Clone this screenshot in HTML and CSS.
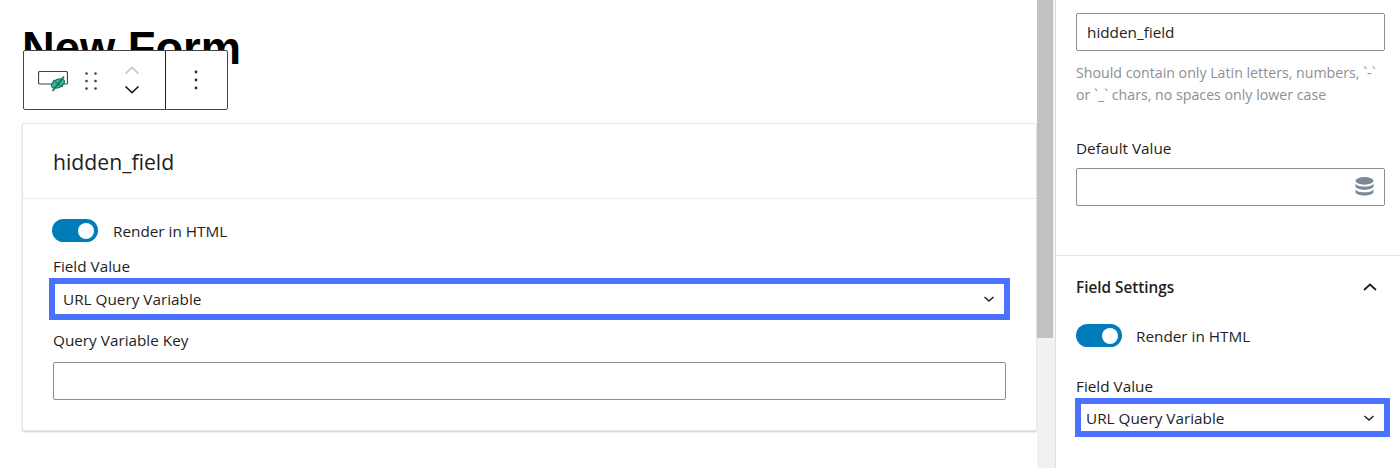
FILE: index.html
```html
<!DOCTYPE html>
<html lang="en">
<head>
    <meta charset="UTF-8">
    <title>New Form</title>
    <link rel="stylesheet" href="styles.css">
</head>
<body>
    <div class="page">
        <main class="editor">
            <h1 class="form-title">New Form</h1>
            <div class="block-toolbar">
                <div class="toolbar-main">
                    <svg class="block-icon" width="30" height="22" viewBox="0 0 30 22">
                        <rect x="0.5" y="0.5" width="29" height="12.500" rx="1.500" fill="#fff" stroke="#2f4858" stroke-width="1.200"/>
                        <ellipse cx="20" cy="12.500" rx="7" ry="4.200" fill="#2fb893" stroke="#1f6f68" stroke-width="1" transform="rotate(-25 20 12.500)"/>
                        <path d="M14.500 20 L26 5.500" stroke="#1f6f68" stroke-width="1.800" fill="none"/>
                        <path d="M15 9 L25 16" stroke="#1f6f68" stroke-width="1" fill="none"/>
                    </svg>
                    <svg class="drag-icon" width="12" height="18" viewBox="0 0 12 18" fill="#3c434a">
                        <circle cx="1.500" cy="1.500" r="1.300"/><circle cx="10.500" cy="1.500" r="1.300"/>
                        <circle cx="1.500" cy="9" r="1.300"/><circle cx="10.500" cy="9" r="1.300"/>
                        <circle cx="1.500" cy="16.500" r="1.300"/><circle cx="10.500" cy="16.500" r="1.300"/>
                    </svg>
                    <div class="mover">
                        <svg width="16" height="9" viewBox="0 0 16 9"><path d="M1.500 7.500 L8 1.500 L14.500 7.500" fill="none" stroke="#c4c4c4" stroke-width="1.700"/></svg>
                        <svg width="16" height="9" viewBox="0 0 16 9"><path d="M1.500 1.500 L8 7.500 L14.500 1.500" fill="none" stroke="#1e1e1e" stroke-width="1.700"/></svg>
                    </div>
                </div>
                <div class="toolbar-more">
                    <svg width="4" height="20" viewBox="0 0 4 20" fill="#2a2a2a">
                        <circle cx="2" cy="2" r="1.400"/><circle cx="2" cy="10" r="1.400"/><circle cx="2" cy="18" r="1.400"/>
                    </svg>
                </div>
            </div>

            <section class="card">
                <div class="card-header">hidden_field</div>
                <div class="card-body">
                    <div class="toggle-row">
                        <span class="toggle"></span>
                        <span class="toggle-label">Render in HTML</span>
                    </div>
                    <div class="label label-value">Field Value</div>
                    <div class="select select-wide">
                        <span>URL Query Variable</span>
                        <svg width="12" height="8" viewBox="0 0 12 8"><path d="M1.500 2 L6 6 L10.500 2" fill="none" stroke="#1e1e1e" stroke-width="1.500"/></svg>
                    </div>
                    <div class="label label-key">Query Variable Key</div>
                    <div class="input"></div>
                </div>
            </section>
        </main>

        <div class="scrollbar"><div class="scroll-thumb"></div></div>

        <aside class="sidebar">
            <div class="panel panel-top">
                <div class="input input-side">hidden_field</div>
                <p class="help">Should contain only Latin letters, numbers, `-`<br>or `_` chars, no spaces only lower case</p>
                <div class="label label-default">Default Value</div>
                <div class="input input-side input-db">
                    <svg width="19" height="23" viewBox="0 0 20 23" fill="#7b8a96">
                        <ellipse cx="10" cy="4.500" rx="9.500" ry="4"/>
                        <path d="M.5 7.500c1.500 2 5 3 9.500 3s8-1 9.500-3v3c-1 2.300-5 3.500-9.500 3.500S1.500 12.800.5 10.500z"/>
                        <path d="M.5 13.500c1.500 2 5 3 9.500 3s8-1 9.500-3v3c-1 2.300-5 3.500-9.500 3.500S1.500 18.800.5 16.500z"/>
                    </svg>
                </div>
            </div>
            <div class="panel panel-settings">
                <div class="panel-head">
                    <span>Field Settings</span>
                    <svg width="16" height="10" viewBox="0 0 16 10"><path d="M2 8 L8 2.500 L14 8" fill="none" stroke="#1e1e1e" stroke-width="1.800"/></svg>
                </div>
                <div class="toggle-row toggle-row-side">
                    <span class="toggle"></span>
                    <span class="toggle-label">Render in HTML</span>
                </div>
                <div class="label label-side-value">Field Value</div>
                <div class="select select-side">
                    <span>URL Query Variable</span>
                    <svg width="12" height="8" viewBox="0 0 12 8"><path d="M1.500 2 L6 6 L10.500 2" fill="none" stroke="#1e1e1e" stroke-width="1.500"/></svg>
                </div>
            </div>
        </aside>
    </div>
</body>
</html>
```

FILE: styles.css
```css
* {
    box-sizing: border-box;
}
html, body {
    margin: 0;
    height: 100%;
    overflow: hidden;
}
body {
    font-family: "Open Sans", "Noto Sans", sans-serif;
    font-size: 15.300px;
    color: #1e1e1e;
    background-color: #fff;
}
.page {
    display: grid;
    grid-template-columns: 1037px 18px 345px;
    height: 468px;
    overflow: hidden;
}
.editor {
    position: relative;
    padding: 21px 0 0 22px;
    overflow: hidden;
}
.form-title {
    margin: 0;
    font-family: "Liberation Sans", sans-serif;
    font-size: 45.300px;
    line-height: 56px;
    font-weight: 700;
    color: #000;
}
.block-toolbar {
    position: absolute;
    left: 23px;
    top: 50px;
    width: 205px;
    height: 60px;
    display: flex;
    background-color: #fff;
    border: 1px solid #444;
    border-radius: 2px;
}
.toolbar-main {
    width: 142px;
    border-right: 1px solid #1e1e1e;
    display: flex;
    align-items: center;
    padding-left: 14px;
}
.block-icon {
    margin-top: 3px;
}
.drag-icon {
    margin: 2px 0 0 17px;
}
.mover {
    margin: 0 0 0 27px;
    display: flex;
    flex-direction: column;
    gap: 10px;
}
.toolbar-more {
    flex: 1;
    display: flex;
    align-items: center;
    justify-content: center;
    padding-right: 1px;
}
.card {
    margin-top: 46px;
    height: 308px;
    background-color: #fff;
    border: 1px solid #e6e6e6;
    border-radius: 2px;
    box-shadow: 0 1px 2px rgba(0, 0, 0, 0.2);
}
.card-header {
    height: 75px;
    padding: 0 30px;
    display: flex;
    align-items: center;
    font-size: 21.200px;
    border-bottom: 1px solid #ececec;
}
.card-body {
    padding: 20px 30px 0;
}
.toggle-row {
    display: flex;
    align-items: center;
    gap: 14px;
    height: 23px;
}
.card-body .toggle-row {
    gap: 15px;
}
.card-body .toggle {
    margin-left: -1px;
}
.toggle {
    width: 46px;
    height: 23px;
    border-radius: 12px;
    background-color: #007cba;
    display: flex;
    align-items: center;
    justify-content: flex-end;
    padding-right: 4px;
}
.toggle::after {
    content: "";
    width: 16px;
    height: 16px;
    border-radius: 50%;
    background-color: #fff;
}
.label, .toggle-label {
    line-height: 20px;
}
.label-value {
    margin-top: 14px;
}
.select {
    display: flex;
    align-items: center;
    justify-content: space-between;
    background-color: #fff;
    border: 6px solid #4a72ff;
}
.select-wide {
    margin: 2px 0 0 -4px;
    width: 961px;
    height: 42px;
    padding: 0 9px 0 8px;
}
.label-key {
    margin-top: 10px;
}
.input {
    margin-top: 12px;
    width: 953px;
    height: 38px;
    border: 1px solid #8c8f94;
    border-radius: 2px;
}
.scrollbar {
    background-color: #f1f1f1;
    padding-right: 2px;
}
.scroll-thumb {
    width: 16px;
    height: 338px;
    background-color: #c1c1c1;
}
.sidebar {
    border-left: 1px solid #e0e0e0;
    display: flex;
    flex-direction: column;
}
.panel {
    padding: 0 15px 0 20px;
}
.panel-top {
    height: 256px;
    padding-top: 13px;
    border-bottom: 1px solid #e6e6e6;
}
.input-side {
    margin-top: 0;
    width: 309px;
    padding: 0 10px;
    display: flex;
    align-items: center;
}
.input-db {
    justify-content: flex-end;
}
.help {
    margin: 11px 0 0;
    font-size: 14.200px;
    color: #8c8f94;
    line-height: 22px;
}
.label-default {
    margin: 32px 0 10px;
}
.panel-head {
    display: flex;
    align-items: center;
    justify-content: space-between;
    padding: 21px 7px 0 0;
    height: 41px;
    font-weight: 600;
}
.toggle-row-side {
    margin-top: 27px;
}
.label-side-value {
    margin-top: 29px;
}
.select-side {
    margin: 2px 0 0 -1px;
    width: 315px;
    height: 39px;
    padding: 0 9px 0 5px;
}
```
